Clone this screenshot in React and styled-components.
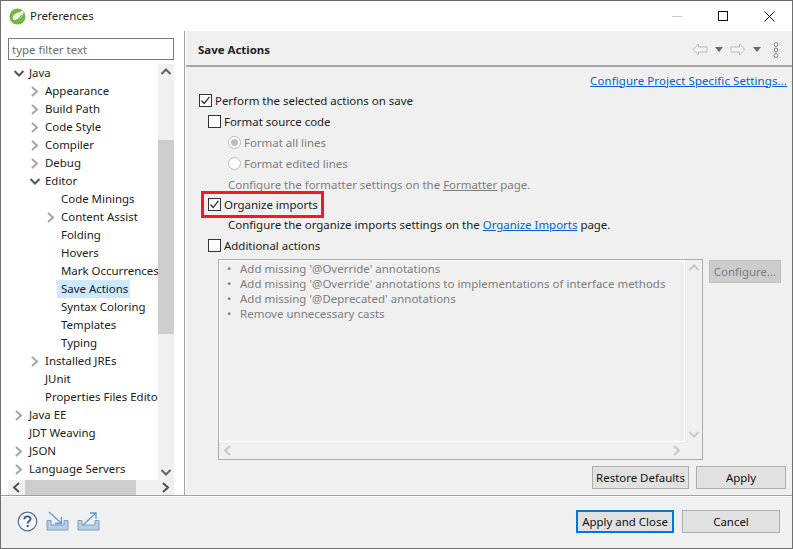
import React from 'react';
import styled, { createGlobalStyle } from 'styled-components';

const GlobalStyle = createGlobalStyle`
  html, body { margin: 0; padding: 0; background: #fff; }
  body { font-family: "Noto Sans", "Open Sans", "Liberation Sans", sans-serif; font-size: 11.45px; color: #111; }
`;

const Window = styled.div`
  width: 793px;
  height: 549px;
  box-sizing: border-box;
  border: 1px solid #707070;
  border-top-color: #6a6a6a;
  display: flex;
  flex-direction: column;
  background: #fff;
  overflow: hidden;
`;

const TitleBar = styled.div`
  height: 30px;
  flex: none;
  display: flex;
  align-items: center;
  padding-left: 8px;
`;

const TitleText = styled.span`
  margin-left: 4px;
  margin-bottom: 1px;
  color: #222;
`;

const WindowButtons = styled.div`
  margin-left: auto;
  display: flex;
  align-items: center;
`;

const WindowButton = styled.div`
  width: 46px;
  height: 30px;
  display: flex;
  align-items: center;
  justify-content: center;
`;

const Main = styled.div`
  flex: 1;
  min-height: 0;
  display: flex;
`;

const Sidebar = styled.div`
  width: 184px;
  flex: none;
  box-sizing: border-box;
  padding: 7px 10px 0 7px;
  border-right: 1px solid #a0a0a0;
  display: flex;
  flex-direction: column;
`;

const Filter = styled.div`
  height: 20px;
  border: 1px solid #7a7a7a;
  display: flex;
  align-items: center;
  padding-left: 3px;
  color: #6d6d6d;
  flex: none;
`;

const TreeArea = styled.div`
  margin-top: 4px;
  height: 416px;
  display: flex;
  flex: none;
`;

const TreeList = styled.div`
  flex: 1;
  min-width: 0;
  overflow: hidden;
`;

const Row = styled.div`
  height: 18px;
  display: flex;
  align-items: center;
  white-space: nowrap;
  position: relative;
  padding-left: ${p => p.$depth * 16 + 21}px;
`;

const RowLabel = styled.span`
  padding: 0 2px 0 0;
  background: ${p => (p.$selected ? '#cde8ff' : 'transparent')};
  box-shadow: ${p => (p.$selected ? '-4px 0 0 #cde8ff' : 'none')};
  line-height: 18px;
  color: #1c1c1c;
`;

const Twisty = styled.span`
  position: absolute;
  left: ${p => p.$depth * 16 + 5}px;
  top: 3px;
  width: 12px;
  height: 13px;
  display: flex;
  align-items: center;
  justify-content: center;
`;

const VScroll = styled.div`
  width: 16px;
  flex: none;
  background: #f0f0f0;
  display: flex;
  flex-direction: column;
`;

const ScrollCap = styled.div`
  height: 16px;
  flex: none;
  display: flex;
  align-items: center;
  justify-content: center;
`;

const ScrollGap = styled.div`
  height: ${p => p.$h}px;
  flex: ${p => (p.$h ? 'none' : 1)};
  background: ${p => (p.$thumb ? '#cdcdcd' : 'transparent')};
`;

const HScroll = styled.div`
  height: 15px;
  flex: none;
  background: #f0f0f0;
  display: flex;
  align-items: stretch;
`;

const HCap = styled.div`
  width: 17px;
  flex: none;
  display: flex;
  align-items: center;
  justify-content: center;
`;

const HThumb = styled.div`
  width: 111px;
  flex: none;
  background: #cdcdcd;
`;

const Panel = styled.div`
  flex: 1;
  min-width: 0;
  background: #f0f0f0;
  border-left: 1px solid #fff;
  display: flex;
  flex-direction: column;
`;

const PanelHeader = styled.div`
  height: 36px;
  flex: none;
  box-sizing: border-box;
  border-bottom: 2px solid #a6a6a6;
  display: flex;
  align-items: center;
  padding: 3px 13px 0 12px;
`;

const PanelTitle = styled.span`
  font-weight: 700;
  color: #222;
`;

const NavIcons = styled.div`
  margin-left: auto;
  display: flex;
  align-items: center;
  gap: 7px;
`;

const KebabWrap = styled.span`
  display: flex;
  margin-left: 5px;
`;

const PanelBody = styled.div`
  flex: 1;
  min-height: 0;
  display: flex;
  flex-direction: column;
  padding: 0 6px 0 13px;
  & > * {
    flex: none;
  }
`;

const LinkRow = styled.div`
  display: flex;
  justify-content: flex-end;
  height: 20px;
  align-items: center;
  margin: 3px -1px 0 0;
  letter-spacing: 0.11px;
`;

const Link = styled.a`
  color: #0066cc;
  text-decoration: underline;
`;

const CheckRow = styled.div`
  height: 21px;
  box-sizing: border-box;
  padding-bottom: 1px;
  display: flex;
  align-items: center;
  margin-left: ${p => p.$indent || 0}px;
  color: #1c1c1c;
`;

const Box = styled.span`
  width: 13px;
  height: 13px;
  box-sizing: border-box;
  border: 1px solid #333;
  background: #fff;
  margin: 1px 3px 0 0;
  flex: none;
  display: flex;
  align-items: center;
  justify-content: center;
`;

const RadioRow = styled.div`
  height: 21px;
  box-sizing: border-box;
  padding-bottom: 1px;
  display: flex;
  align-items: center;
  margin-left: 29px;
  color: #7d7d7d;
`;

const Radio = styled.span`
  width: 13px;
  height: 13px;
  box-sizing: border-box;
  border: 1px solid #bcbcbc;
  border-radius: 50%;
  background: #fff;
  margin: 1px 3px 0 0;
  flex: none;
  display: flex;
  align-items: center;
  justify-content: center;
  &::after {
    content: "";
    width: 7px;
    height: 7px;
    border-radius: 50%;
    background: ${p => (p.$on ? '#bcbcbc' : 'transparent')};
  }
`;

const Note = styled.div`
  height: 21px;
  box-sizing: border-box;
  padding-bottom: ${p => (p.$muted ? 1 : 0)}px;
  display: flex;
  align-items: center;
  margin-left: 29px;
  white-space: nowrap;
  color: ${p => (p.$muted ? '#7d7d7d' : '#1c1c1c')};
`;

const Underlined = styled.span`
  text-decoration: underline;
`;

const Highlight = styled.div`
  align-self: flex-start;
  display: flex;
  align-items: center;
  box-sizing: border-box;
  height: 27px;
  width: 123px;
  margin: -4px 0 -4px 2px;
  border: 3px solid #ee1c25;
  padding: 0 0 1px 4px;
  color: #1c1c1c;
  white-space: nowrap;
`;

const ActionsArea = styled.div`
  display: flex;
  align-items: flex-start;
  margin-top: 3px;
`;

const ActionsBox = styled.div`
  width: 485px;
  height: 201px;
  box-sizing: border-box;
  margin-left: 19px;
  border: 1px solid #acacac;
  display: flex;
  flex-direction: column;
  flex: none;
`;

const ActionsTop = styled.div`
  flex: 1;
  min-height: 0;
  display: flex;
`;

const ActionsList = styled.div`
  flex: 1;
  background: #f0f0f0;
  border: 1px solid #fff;
  padding: 0 0 0 7px;
  color: #7d7d7d;
  line-height: 15px;
  letter-spacing: 0.04px;
`;

const ActionItem = styled.div`
  display: flex;
  white-space: nowrap;
`;

const Bullet = styled.span`
  width: 13px;
  flex: none;
`;

const ActionsVBar = styled.div`
  width: 17px;
  flex: none;
  display: flex;
  flex-direction: column;
  justify-content: space-between;
`;

const ActionsHBar = styled.div`
  height: 17px;
  flex: none;
  display: flex;
  justify-content: space-between;
  padding-right: 17px;
`;

const Button = styled.div`
  box-sizing: border-box;
  width: ${p => p.$w}px;
  height: ${p => p.$h || 23}px;
  background: ${p => (p.$disabled ? '#cccccc' : '#e1e1e1')};
  border: ${p => (p.$primary ? '2px solid #0078d7' : '1px solid #adadad')};
  color: ${p => (p.$disabled ? '#7d7d7d' : '#111')};
  display: flex;
  align-items: center;
  justify-content: center;
  white-space: nowrap;
  flex: none;
`;

const ConfigureButton = styled(Button)`
  margin: 1px 0 0 6px;
  border-color: #bfbfbf;
`;

const RestoreRow = styled.div`
  display: flex;
  justify-content: flex-end;
  gap: 7px;
  margin-top: 6px;
`;

const Footer = styled.div`
  height: 53px;
  flex: none;
  box-sizing: border-box;
  border-top: 1px solid #a0a0a0;
  background: #f0f0f0;
  box-shadow: inset 0 1px 0 #fff;
  display: flex;
  align-items: center;
  padding: 0 12px 2px 16px;
`;

const HelpIcons = styled.div`
  display: flex;
  align-items: center;
  gap: 8px;
`;

const FooterButtons = styled.div`
  margin-left: auto;
  display: flex;
  gap: 8px;
`;

const Chevron = ({ dir = 'right', color = '#a6a6a6', width = 2 }) => {
  const paths = {
    right: 'M3 2 L8 6.5 L3 11',
    down: 'M1.5 4 L6 8.5 L10.5 4',
    up: 'M1.5 8 L6 3.5 L10.5 8',
    left: 'M8 2 L3 6.5 L8 11',
  };
  return (
    <svg width="12" height="13" viewBox="0 0 12 13">
      <path d={paths[dir]} fill="none" stroke={color} strokeWidth={width} />
    </svg>
  );
};

const SpringLogo = () => (
  <svg width="17" height="17" viewBox="0 0 17 17">
    <circle cx="8.5" cy="8.5" r="8" fill="#74b545" />
    <path d="M15 1.5 C14.5 7 11.5 12 5.5 12 C3.5 12 3.2 9.5 4.5 7.5 C6.8 4 11.5 5 15 1.5Z" fill="#eef6e6" />
    <path d="M3.5 13.5 C7 13 10.5 11 12.5 7" fill="none" stroke="#74b545" strokeWidth="1" />
  </svg>
);

const CheckMark = () => (
  <svg width="11" height="11" viewBox="0 0 11 11">
    <path d="M1.5 5.5 L4.2 8.5 L9.5 1.8" fill="none" stroke="#333" strokeWidth="1.3" />
  </svg>
);

const CheckBox = ({ checked }) => <Box>{checked && <CheckMark />}</Box>;

const NavArrow = ({ flip }) => (
  <svg width="16" height="13" viewBox="0 0 16 13" style={flip ? { transform: 'scaleX(-1)' } : undefined}>
    <path d="M1 6.5 L6.5 1 V4 H15 V9 H6.5 V12 Z" fill="#f4f4f4" stroke="#b9b9b9" strokeWidth="1" />
  </svg>
);

const SmallCaret = () => (
  <svg width="8" height="5" viewBox="0 0 8 5">
    <path d="M0 0 H8 L4 5 Z" fill="#666" />
  </svg>
);

const KebabDots = () => (
  <svg width="6" height="16" viewBox="0 0 6 16">
    <circle cx="3" cy="2.5" r="1.9" fill="#fff" stroke="#777" />
    <circle cx="3" cy="8" r="1.9" fill="#fff" stroke="#777" />
    <circle cx="3" cy="13.5" r="1.9" fill="#fff" stroke="#777" />
  </svg>
);

const HelpIcon = () => (
  <svg width="21" height="21" viewBox="0 0 22 22">
    <circle cx="11" cy="11" r="9.7" fill="#f8f8f8" stroke="#5b6f96" strokeWidth="1.3" />
    <path d="M7.8 8.6 C7.8 6.6 9.2 5.6 11 5.6 C12.9 5.6 14.2 6.7 14.2 8.3 C14.2 10.5 11.2 10.6 11.2 13.1" fill="none" stroke="#3f5785" strokeWidth="2" />
    <rect x="10.1" y="14.6" width="2.2" height="2.2" fill="#3f5785" />
  </svg>
);

const TrayIcon = ({ out }) => (
  <svg width="23" height="20" viewBox="0 0 23 20">
    <path d="M1 9.5 H5 V14 H18 V9.5 H22 V19 H1 Z" fill="#b8cde6" stroke="#7f9cc4" strokeWidth="1" />
    {out ? (
      <path d="M6 14 L18 3 M13 2 H19 V8" fill="none" stroke="#5f9bd3" strokeWidth="1.3" />
    ) : (
      <path d="M3 1 L15 12 M15.5 6 V12.5 H9" fill="none" stroke="#5f9bd3" strokeWidth="1.3" />
    )}
  </svg>
);

const treeRows = [
  { label: 'Java', depth: 0, twisty: 'down' },
  { label: 'Appearance', depth: 1, twisty: 'right' },
  { label: 'Build Path', depth: 1, twisty: 'right' },
  { label: 'Code Style', depth: 1, twisty: 'right' },
  { label: 'Compiler', depth: 1, twisty: 'right' },
  { label: 'Debug', depth: 1, twisty: 'right' },
  { label: 'Editor', depth: 1, twisty: 'down' },
  { label: 'Code Minings', depth: 2 },
  { label: 'Content Assist', depth: 2, twisty: 'right' },
  { label: 'Folding', depth: 2 },
  { label: 'Hovers', depth: 2 },
  { label: 'Mark Occurrences', depth: 2 },
  { label: 'Save Actions', depth: 2, selected: true },
  { label: 'Syntax Coloring', depth: 2 },
  { label: 'Templates', depth: 2 },
  { label: 'Typing', depth: 2 },
  { label: 'Installed JREs', depth: 1, twisty: 'right' },
  { label: 'JUnit', depth: 1 },
  { label: 'Properties Files Editor', depth: 1 },
  { label: 'Java EE', depth: 0, twisty: 'right' },
  { label: 'JDT Weaving', depth: 0 },
  { label: 'JSON', depth: 0, twisty: 'right' },
  { label: 'Language Servers', depth: 0, twisty: 'right' },
];

const actions = [
  "Add missing '@Override' annotations",
  "Add missing '@Override' annotations to implementations of interface methods",
  "Add missing '@Deprecated' annotations",
  'Remove unnecessary casts',
];

const App = () => (
  <>
    <GlobalStyle />
    <Window>
      <TitleBar>
        <SpringLogo />
        <TitleText>Preferences</TitleText>
        <WindowButtons>
          <WindowButton>
            <svg width="11" height="11" viewBox="0 0 11 11"><path d="M0 5.5 H10" stroke="#ccc" strokeWidth="1" /></svg>
          </WindowButton>
          <WindowButton>
            <svg width="11" height="11" viewBox="0 0 11 11"><rect x="0.5" y="0.5" width="9" height="9" fill="none" stroke="#111" /></svg>
          </WindowButton>
          <WindowButton>
            <svg width="11" height="11" viewBox="0 0 11 11"><path d="M0.5 0.5 L10.5 10.5 M10.5 0.5 L0.5 10.5" stroke="#111" strokeWidth="1" /></svg>
          </WindowButton>
        </WindowButtons>
      </TitleBar>
      <Main>
        <Sidebar>
          <Filter>type filter text</Filter>
          <TreeArea>
            <TreeList>
              {treeRows.map(row => (
                <Row key={row.label} $depth={row.depth}>
                  {row.twisty && (
                    <Twisty $depth={row.depth}>
                      <Chevron dir={row.twisty} color={row.twisty === 'down' ? '#555' : '#a6a6a6'} />
                    </Twisty>
                  )}
                  <RowLabel $selected={row.selected}>{row.label}</RowLabel>
                </Row>
              ))}
            </TreeList>
            <VScroll>
              <ScrollCap><Chevron dir="up" color="#606060" /></ScrollCap>
              <ScrollGap $h={60} />
              <ScrollGap $h={194} $thumb />
              <ScrollGap />
              <ScrollCap><Chevron dir="down" color="#606060" /></ScrollCap>
            </VScroll>
          </TreeArea>
          <HScroll>
            <HCap><Chevron dir="left" color="#505050" /></HCap>
            <HThumb />
            <ScrollGap />
            <HCap><Chevron dir="right" color="#505050" /></HCap>
          </HScroll>
        </Sidebar>
        <Panel>
          <PanelHeader>
            <PanelTitle>Save Actions</PanelTitle>
            <NavIcons>
              <NavArrow />
              <SmallCaret />
              <NavArrow flip />
              <SmallCaret />
              <KebabWrap><KebabDots /></KebabWrap>
            </NavIcons>
          </PanelHeader>
          <PanelBody>
            <LinkRow><Link>Configure Project Specific Settings...</Link></LinkRow>
            <CheckRow><CheckBox checked />Perform the selected actions on save</CheckRow>
            <CheckRow $indent={9}><CheckBox />Format source code</CheckRow>
            <RadioRow><Radio $on />Format all lines</RadioRow>
            <RadioRow><Radio />Format edited lines</RadioRow>
            <Note $muted>Configure the formatter settings on the&nbsp;<Underlined>Formatter</Underlined>&nbsp;page.</Note>
            <Highlight><CheckBox checked />Organize imports</Highlight>
            <Note>Configure the organize imports settings on the&nbsp;<Link>Organize Imports</Link>&nbsp;page.</Note>
            <CheckRow $indent={9}><CheckBox />Additional actions</CheckRow>
            <ActionsArea>
              <ActionsBox>
                <ActionsTop>
                  <ActionsList>
                    {actions.map(text => (
                      <ActionItem key={text}><Bullet>•</Bullet>{text}</ActionItem>
                    ))}
                  </ActionsList>
                  <ActionsVBar>
                    <ScrollCap><Chevron dir="up" color="#c8c8c8" /></ScrollCap>
                    <ScrollCap><Chevron dir="down" color="#c8c8c8" /></ScrollCap>
                  </ActionsVBar>
                </ActionsTop>
                <ActionsHBar>
                  <HCap><Chevron dir="left" color="#c8c8c8" /></HCap>
                  <HCap><Chevron dir="right" color="#c8c8c8" /></HCap>
                </ActionsHBar>
              </ActionsBox>
              <ConfigureButton $w={72} $disabled>Configure...</ConfigureButton>
            </ActionsArea>
            <RestoreRow>
              <Button $w={97}>Restore Defaults</Button>
              <Button $w={90}>Apply</Button>
            </RestoreRow>
          </PanelBody>
        </Panel>
      </Main>
      <Footer>
        <HelpIcons>
          <HelpIcon />
          <TrayIcon />
          <TrayIcon out />
        </HelpIcons>
        <FooterButtons>
          <Button $w={98} $primary>Apply and Close</Button>
          <Button $w={98}>Cancel</Button>
        </FooterButtons>
      </Footer>
    </Window>
  </>
);

export default App;
